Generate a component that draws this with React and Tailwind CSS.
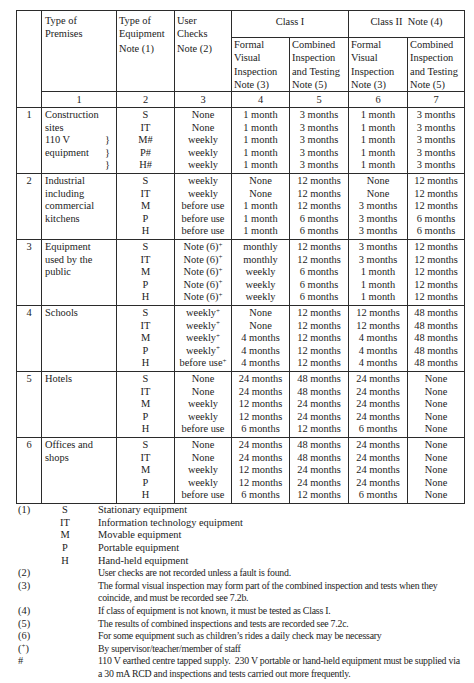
import React from "react";

const sections = [
  {
    n: "1",
    premises: [
      ["Construction", ""],
      ["sites", ""],
      ["110 V", "}"],
      ["equipment", "}"],
      ["", "}"],
    ],
    eq: ["S", "IT", "M#", "P#", "H#"],
    uc: ["None", "None", "weekly", "weekly", "weekly"],
    c4: ["1 month", "1 month", "1 month", "1 month", "1 month"],
    c5: ["3 months", "3 months", "3 months", "3 months", "3 months"],
    c6: ["1 month", "1 month", "1 month", "1 month", "1 month"],
    c7: ["3 months", "3 months", "3 months", "3 months", "3 months"],
  },
  {
    n: "2",
    premises: [["Industrial"], ["including"], ["commercial"], ["kitchens"]],
    eq: ["S", "IT", "M", "P", "H"],
    uc: ["weekly", "weekly", "before use", "before use", "before use"],
    c4: ["None", "None", "1 month", "1 month", "1 month"],
    c5: ["12 months", "12 months", "12 months", "6 months", "6 months"],
    c6: ["None", "None", "3 months", "3 months", "3 months"],
    c7: ["12 months", "12 months", "12 months", "6 months", "6 months"],
  },
  {
    n: "3",
    premises: [["Equipment"], ["used by the"], ["public"]],
    eq: ["S", "IT", "M", "P", "H"],
    uc: ["Note (6)+", "Note (6)+", "Note (6)+", "Note (6)+", "Note (6)+"],
    c4: ["monthly", "monthly", "weekly", "weekly", "weekly"],
    c5: ["12 months", "12 months", "6 months", "6 months", "6 months"],
    c6: ["3 months", "3 months", "1 month", "1 month", "1 month"],
    c7: ["12 months", "12 months", "12 months", "12 months", "12 months"],
  },
  {
    n: "4",
    premises: [["Schools"]],
    eq: ["S", "IT", "M", "P", "H"],
    uc: ["weekly+", "weekly+", "weekly+", "weekly+", "before use+"],
    c4: ["None", "None", "4 months", "4 months", "4 months"],
    c5: ["12 months", "12 months", "12 months", "12 months", "12 months"],
    c6: ["12 months", "12 months", "4 months", "4 months", "4 months"],
    c7: ["48 months", "48 months", "48 months", "48 months", "48 months"],
  },
  {
    n: "5",
    premises: [["Hotels"]],
    eq: ["S", "IT", "M", "P", "H"],
    uc: ["None", "None", "weekly", "weekly", "before use"],
    c4: ["24 months", "24 months", "12 months", "12 months", "6 months"],
    c5: ["48 months", "48 months", "24 months", "24 months", "12 months"],
    c6: ["24 months", "24 months", "24 months", "24 months", "6 months"],
    c7: ["None", "None", "None", "None", "None"],
  },
  {
    n: "6",
    premises: [["Offices and"], ["shops"]],
    eq: ["S", "IT", "M", "P", "H"],
    uc: ["None", "None", "weekly", "weekly", "before use"],
    c4: ["24 months", "24 months", "12 months", "12 months", "6 months"],
    c5: ["48 months", "48 months", "24 months", "24 months", "12 months"],
    c6: ["24 months", "24 months", "24 months", "24 months", "6 months"],
    c7: ["None", "None", "None", "None", "None"],
  },
];

const bd = "border border-[#2b2b2b]";

function Val({ t }) {
  if (t.endsWith("+")) {
    return (
      <div className="whitespace-nowrap">
        {t.slice(0, -1)}
        <sup className="text-[7px]">+</sup>
      </div>
    );
  }
  return <div className="whitespace-nowrap">{t}</div>;
}

function DataCell({ items }) {
  return (
    <td className={`${bd} align-top text-center pt-[1px] pb-[1.5px] leading-[12.5px]`}>
      {items.map((t, i) => (
        <Val key={i} t={t} />
      ))}
    </td>
  );
}

function NoteRow({ label, children }) {
  return (
    <div className="flex">
      <div className="w-[80px] shrink-0">{label}</div>
      <div className="whitespace-nowrap text-[9.8px] tracking-[-0.22px]">{children}</div>
    </div>
  );
}

export default function App() {
  return (
    <div
      className="bg-white text-[#1c1c1c] w-[474px] h-[683px] overflow-hidden pt-[10px] pl-[16px] text-[10.4px]"
      style={{ fontFamily: '"Liberation Serif", "Times New Roman", serif' }}
    >
      <table className="table-fixed border-collapse w-[448px] leading-[13px]">
        <colgroup>
          <col className="w-[25px]" />
          <col className="w-[75px]" />
          <col className="w-[58px]" />
          <col className="w-[57px]" />
          <col className="w-[58px]" />
          <col className="w-[59px]" />
          <col className="w-[59px]" />
          <col className="w-[57px]" />
        </colgroup>
        <tbody>
          <tr className="h-[27px]">
            <td className={bd} rowSpan={3}></td>
            <td className={`${bd} align-top pl-[3px] pt-[3px]`} rowSpan={2}>
              <div>Type of</div>
              <div>Premises</div>
            </td>
            <td className={`${bd} align-top pl-[2px] pt-[3px]`} rowSpan={2}>
              <div>Type of</div>
              <div>Equipment</div>
              <div className="mt-[2px]">Note (1)</div>
            </td>
            <td className={`${bd} align-top pl-[2px] pt-[3px]`} rowSpan={2}>
              <div>User</div>
              <div>Checks</div>
              <div className="mt-[2px]">Note (2)</div>
            </td>
            <td className={`${bd} text-center align-middle pb-[6px]`} colSpan={2}>
              Class I
            </td>
            <td className={`${bd} text-center align-middle pb-[6px] whitespace-pre`} colSpan={2}>
              {"Class II  Note (4)"}
            </td>
          </tr>
          <tr className="h-[54px]">
            {[
              ["Formal", "Visual", "Inspection", "Note (3)"],
              ["Combined", "Inspection", "and Testing", "Note (5)"],
              ["Formal", "Visual", "Inspection", "Note (3)"],
              ["Combined", "Inspection", "and Testing", "Note (5)"],
            ].map((lines, i) => (
              <td key={i} className={`${bd} align-top pl-[2px] pt-[0px] leading-[13.3px]`}>
                {lines.map((l, j) => (
                  <div key={j} className="whitespace-nowrap">
                    {l}
                  </div>
                ))}
              </td>
            ))}
          </tr>
          <tr className="h-[16px]">
            {["1", "2", "3", "4", "5", "6", "7"].map((n) => (
              <td key={n} className={`${bd} text-center align-middle leading-[12px]`}>
                {n}
              </td>
            ))}
          </tr>
          {sections.map((s) => (
            <tr key={s.n}>
              <td className={`${bd} align-top text-center pt-[1px] leading-[12.5px]`}>{s.n}</td>
              <td className={`${bd} align-top pl-[3px] pr-[6px] pt-[1px] leading-[12.5px]`}>
                {s.premises.map((p, i) => (
                  <div key={i} className="flex justify-between whitespace-nowrap h-[12.5px]">
                    <span>{p[0]}</span>
                    <span>{p[1] || ""}</span>
                  </div>
                ))}
              </td>
              <DataCell items={s.eq} />
              <DataCell items={s.uc} />
              <DataCell items={s.c4} />
              <DataCell items={s.c5} />
              <DataCell items={s.c6} />
              <DataCell items={s.c7} />
            </tr>
          ))}
        </tbody>
      </table>

      <div className="leading-[12.6px] pl-[2px]">
        {[
          ["(1)", "S", "Stationary equipment"],
          ["", "IT", "Information technology equipment"],
          ["", "M", "Movable equipment"],
          ["", "P", "Portable equipment"],
          ["", "H", "Hand-held equipment"],
        ].map(([l, c, t], i) => (
          <div key={i} className="flex">
            <div className="w-[30px] shrink-0">{l}</div>
            <div className="w-[34px] shrink-0 text-center">{c}</div>
            <div className="w-[16px] shrink-0"></div>
            <div className="whitespace-nowrap">{t}</div>
          </div>
        ))}
        <NoteRow label="(2)">User checks are not recorded unless a fault is found.</NoteRow>
        <NoteRow label="(3)">
          The formal visual inspection may form part of the combined inspection and tests when they
          <br />
          coincide, and must be recorded see 7.2b.
        </NoteRow>
        <NoteRow label="(4)">If class of equipment is not known, it must be tested as Class I.</NoteRow>
        <NoteRow label="(5)">The results of combined inspections and tests are recorded see 7.2c.</NoteRow>
        <NoteRow label="(6)">For some equipment such as children’s rides a daily check may be necessary</NoteRow>
        <NoteRow
          label={
            <span>
              (<sup className="text-[7px]">+</sup>)
            </span>
          }
        >
          By supervisor/teacher/member of staff
        </NoteRow>
        <NoteRow label="#">
          <span className="whitespace-pre">110 V earthed centre tapped supply.  230 V portable or hand-held equipment must be supplied via</span>
          <br />
          a 30 mA RCD and inspections and tests carried out more frequently.
        </NoteRow>
      </div>
    </div>
  );
}
